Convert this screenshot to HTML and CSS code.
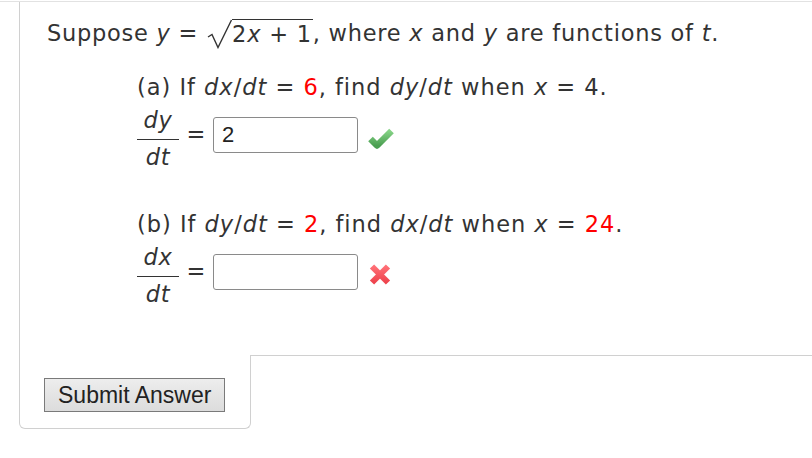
FILE: index.html
```html
<!DOCTYPE html>
<html>
<head>
<meta charset="utf-8">
<link rel="stylesheet" href="styles.css">
</head>
<body>
<div class="page">
  <div class="panel">
    <div class="content">
      <p class="question">Suppose <i>y</i> = <span class="sqrt"><svg class="radical" width="25" height="30" viewBox="0 0 25 30"><path d="M1 18 L5 15.5 L11 28.5 L24.5 1" fill="none" stroke="#333" stroke-width="1.4"/></svg><span class="radicand">2<i>x</i> + 1</span></span>, where <i>x</i> and <i>y</i> are functions of <i>t</i>.</p>

      <div class="part">
        <p class="prompt">(a) If <i>dx</i>/<i>dt</i> = <span class="red">6</span>, find <i>dy</i>/<i>dt</i> when <i>x</i> = 4.</p>
        <div class="answer">
          <span class="frac"><span class="num"><i>dy</i></span><span class="den"><i>dt</i></span></span>
          <span class="eq">=</span>
          <span class="box">2</span>
          <svg class="mark check" width="28" height="23" viewBox="0 0 28 23"><defs><linearGradient id="g" x1="0" y1="0" x2="0" y2="1"><stop offset="0" stop-color="#86d386"/><stop offset="1" stop-color="#4b9f52"/></linearGradient></defs><path d="M3.5 12 L10 18.5 L24.5 4" fill="none" stroke="url(#g)" stroke-width="6.5" stroke-linejoin="round"/></svg>
        </div>
      </div>

      <div class="part part-b">
        <p class="prompt">(b) If <i>dy</i>/<i>dt</i> = <span class="red">2</span>, find <i>dx</i>/<i>dt</i> when <i>x</i> = <span class="red">24</span>.</p>
        <div class="answer">
          <span class="frac"><span class="num"><i>dx</i></span><span class="den"><i>dt</i></span></span>
          <span class="eq">=</span>
          <span class="box"></span>
          <svg class="mark cross" width="24" height="23" viewBox="0 0 24 23"><defs><linearGradient id="r" x1="0" y1="0" x2="0" y2="1"><stop offset="0" stop-color="#ff6f76"/><stop offset="1" stop-color="#ee434d"/></linearGradient></defs><path d="M4 3.5 L20 19.5 M20 3.5 L4 19.5" fill="none" stroke="url(#r)" stroke-width="6"/></svg>
        </div>
      </div>
    </div>
    <div class="footer">
      <div class="submit-cell"><button class="submit">Submit Answer</button></div>
      <div class="rest"></div>
    </div>
  </div>
</div>
</body>
</html>
```
FILE: styles.css
```css
html, body {
  margin: 0;
  padding: 0;
  background: #fff;
}
body {
  font-family: "DejaVu Sans", Verdana, sans-serif;
  color: #333;
}
.page {
  border-top: 1px solid #e2e2e2;
  margin-top: 1px;
}
.panel {
  margin-left: 19px;
}
.content {
  border-left: 1px solid #d0d0d0;
  padding: 15px 0 47px 27px;
}
.question {
  margin: 0;
  font-size: 22.5px;
  letter-spacing: 0.75px;
  line-height: 32px;
  display: flex;
  align-items: center;
  white-space: pre;
}
.sqrt {
  display: inline-flex;
  align-items: flex-start;
  margin-left: 1px;
}
.radical {
  display: block;
  margin-top: 1px;
}
.radicand {
  border-top: 1.4px solid #333;
  margin-top: 1px;
  line-height: 29px;
  padding-right: 1px;
}
.part {
  margin-left: 90px;
  margin-top: 23px;
}
.part-b {
  margin-top: 38px;
}
.prompt {
  margin: 0;
  font-size: 22.5px;
  letter-spacing: 0.98px;
  line-height: 30px;
}
.red {
  color: #f00;
}
.answer {
  display: flex;
  align-items: flex-start;
  margin-top: 5px;
  font-size: 22.5px;
}
.frac {
  display: inline-flex;
  flex-direction: column;
  align-items: center;
  width: 42px;
  letter-spacing: 0.8px;
}
.num {
  line-height: 26px;
  padding-bottom: 6px;
  border-bottom: 1.3px solid #333;
  width: 100%;
  text-align: center;
}
.den {
  line-height: 28px;
  padding-top: 3px;
}
.eq {
  width: 24px;
  text-align: center;
  line-height: 30px;
  margin-top: 12px;
  margin-left: 5px;
  margin-right: 5px;
}
.box {
  box-sizing: border-box;
  width: 145px;
  height: 36px;
  margin-top: 10px;
  border: 1px solid #8a8a8a;
  border-radius: 3px;
  font-family: "Liberation Sans", Arial, sans-serif;
  font-size: 22px;
  line-height: 34px;
  padding-left: 8px;
  color: #222;
}
.mark {
  display: block;
}
.check {
  margin-left: 9px;
  margin-top: 20px;
}
.cross {
  margin-left: 10px;
  margin-top: 19px;
}
.footer {
  display: flex;
}
.submit-cell {
  width: 232px;
  border-left: 1px solid #d0d0d0;
  border-right: 1px solid #d0d0d0;
  border-bottom: 1px solid #d0d0d0;
  border-radius: 0 0 6px 6px;
  padding: 23px 0 16px 24px;
  box-sizing: border-box;
}
.rest {
  flex: 1;
  border-top: 1px solid #d0d0d0;
}
.submit {
  display: block;
  font-family: "Liberation Sans", Arial, sans-serif;
  font-size: 23px;
  color: #222;
  height: 34px;
  padding: 0 13px;
  border: 1px solid #7a7a7a;
  border-radius: 0;
  background: linear-gradient(#ededed, #dcdcdc);
}
```
